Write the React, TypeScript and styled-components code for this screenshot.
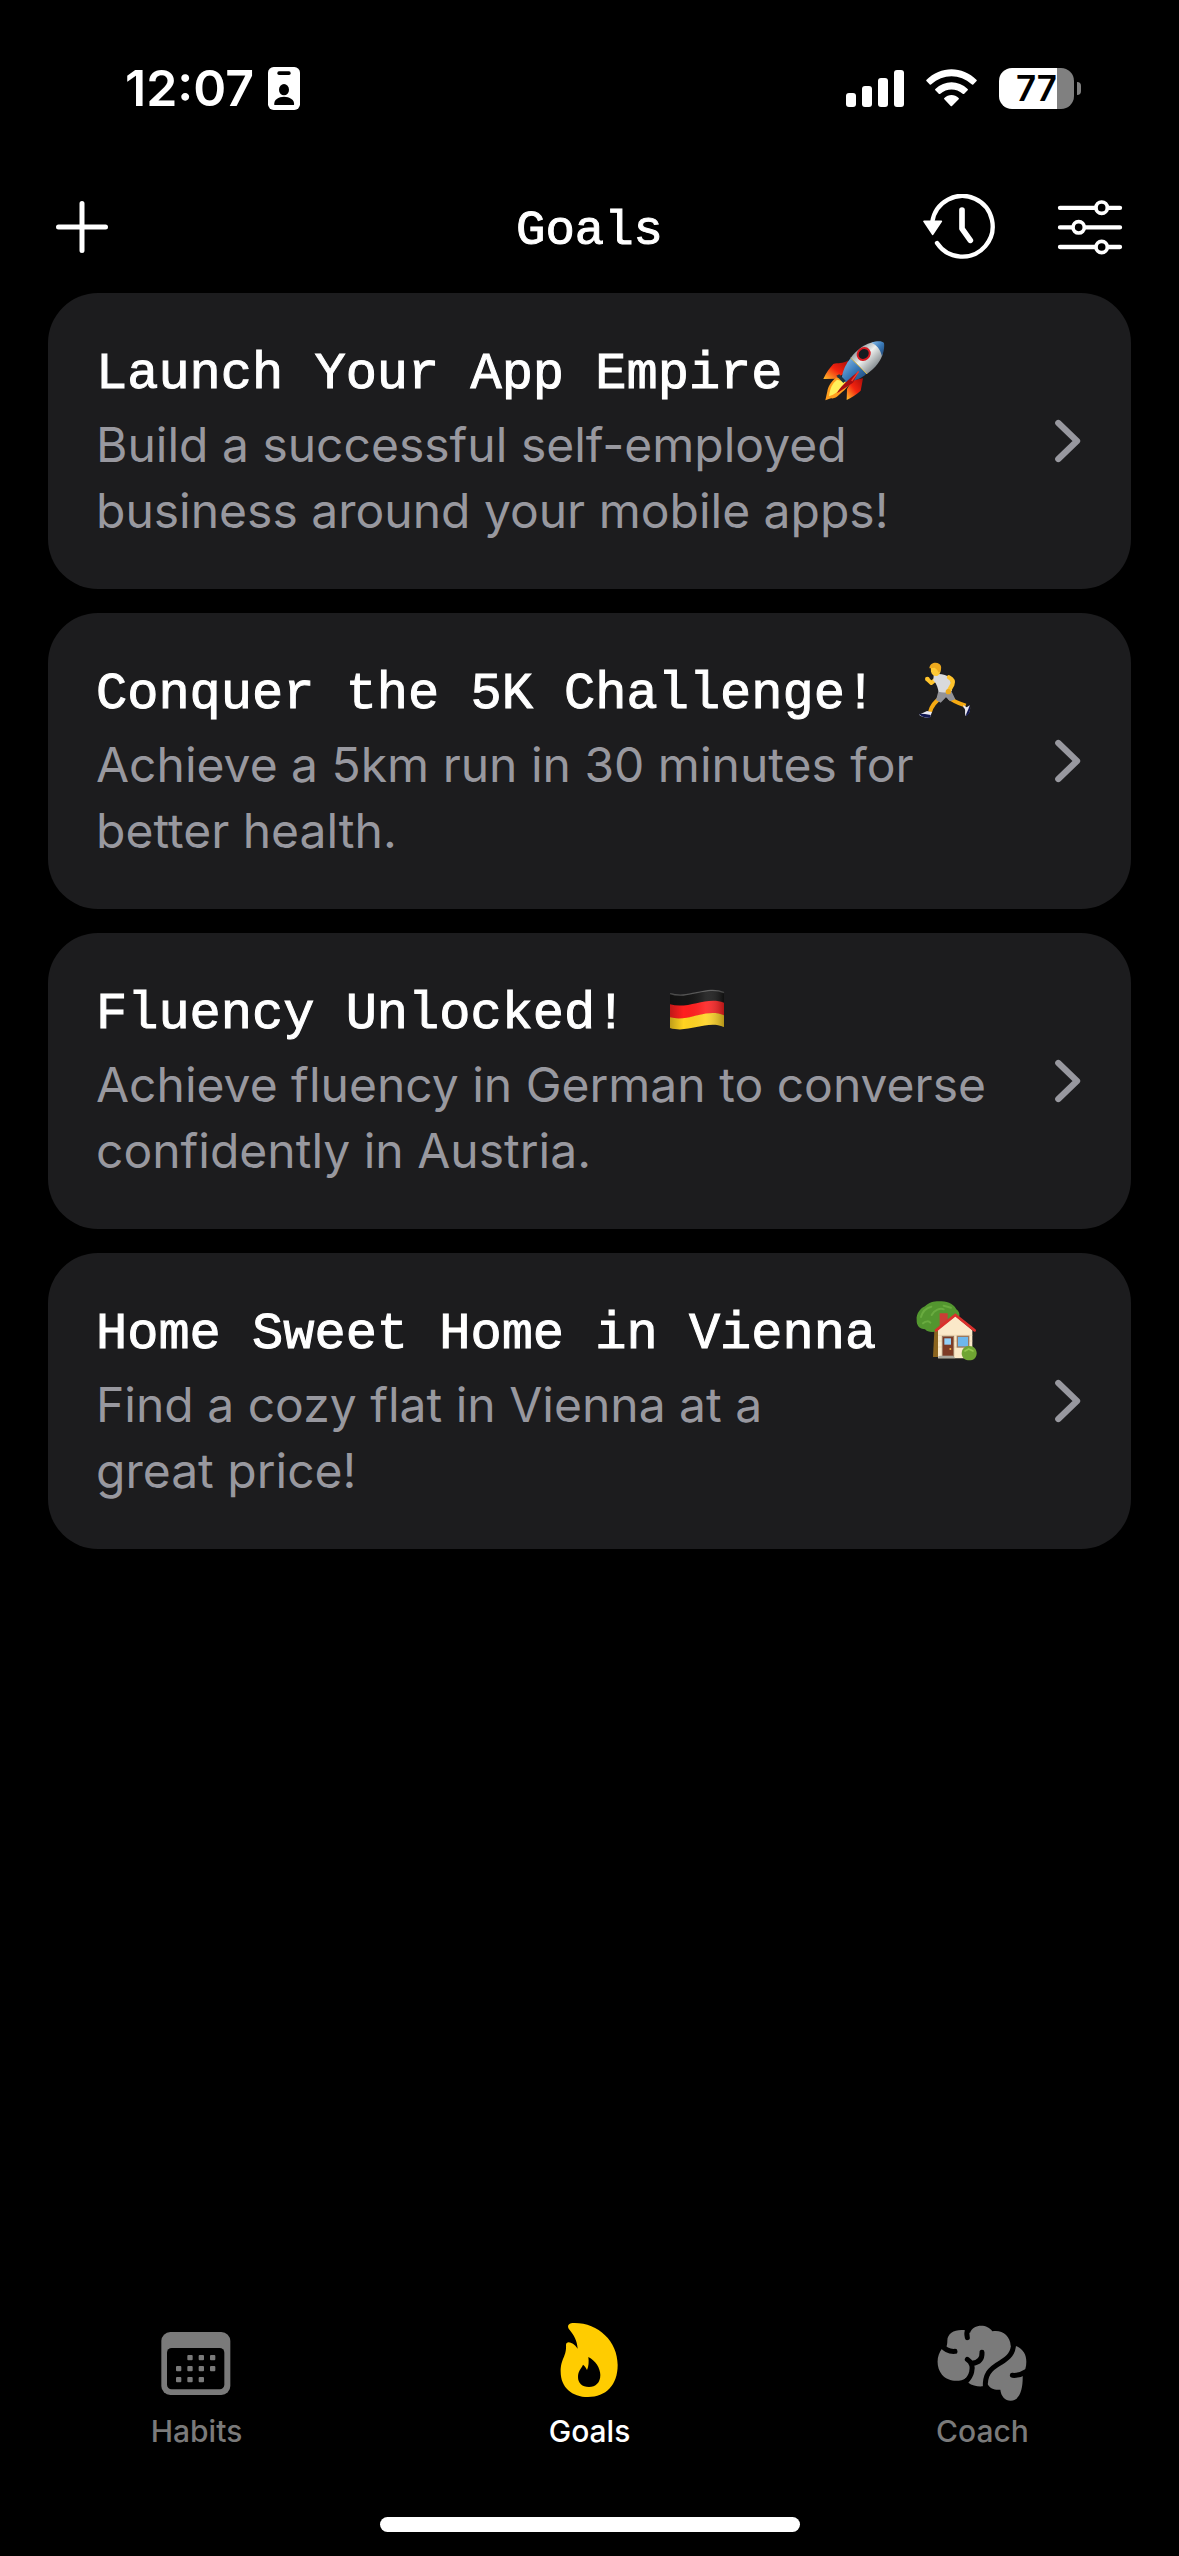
import React from 'react';
import styled, { createGlobalStyle } from 'styled-components';

const sans = `Inter, Roboto, "Liberation Sans", sans-serif`;
const mono = `"Liberation Mono", "DejaVu Sans Mono", monospace`;

const GlobalStyle = createGlobalStyle`
  *, *::before, *::after { box-sizing: border-box; }
  body { margin: 0; background: #000; color: #fff; font-family: ${sans}; }
  h1, h2, p, ul { margin: 0; padding: 0; }
  ul { list-style: none; }
  svg { display: block; flex: none; }
`;

const Screen = styled.div`
  display: flex;
  flex-direction: column;
  min-height: 100vh;
  background: #000;
`;

const StatusBar = styled.div`
  display: flex;
  align-items: center;
  justify-content: space-between;
  height: 176px;
  padding: 0 98px 0 125px;
`;

const StatusGroup = styled.div<{ $gap: number }>`
  display: flex;
  align-items: center;
  gap: ${(p) => p.$gap}px;
`;

const Time = styled.time`
  font-size: 50px;
  line-height: 60px;
  font-weight: 600;
`;

const BatteryWrap = styled.div`
  display: flex;
  align-items: center;
  gap: 3px;
`;

const Battery = styled.div`
  display: flex;
  align-items: center;
  justify-content: center;
  width: 75px;
  height: 41px;
  border-radius: 13px;
  background: linear-gradient(to right, #fff 77%, #808080 77%);
  color: #000;
  font-size: 35px;
  line-height: 41px;
  font-weight: 600;
`;

const BatteryTip = styled.div`
  width: 4px;
  height: 13px;
  border-radius: 0 4px 4px 0;
  background: #808080;
`;

const Header = styled.header`
  display: grid;
  grid-template-columns: 1fr auto 1fr;
  align-items: center;
  height: 102px;
  padding: 0 56px;
`;

const HeaderActions = styled.div`
  display: flex;
  justify-content: flex-end;
  gap: 62px;
`;

const IconButton = styled.button`
  display: block;
  justify-self: start;
  padding: 0;
  border: 0;
  background: none;
  color: #fff;
  cursor: pointer;
`;

const ScreenTitle = styled.h1`
  padding-top: 8px;
  font-family: ${mono};
  font-size: 49px;
  line-height: 60px;
  font-weight: 400;
  -webkit-text-stroke: 1px currentColor;
`;

const GoalList = styled.ul`
  display: flex;
  flex: 1;
  flex-direction: column;
  gap: 24px;
  padding: 15px 48px;
`;

const GoalCard = styled.a`
  display: flex;
  align-items: center;
  justify-content: space-between;
  gap: 32px;
  padding: 45px 50px 45px 48px;
  border-radius: 50px;
  background: #1c1c1e;
  color: #98989f;
  text-decoration: none;
`;

const GoalHeading = styled.div`
  display: flex;
  align-items: center;
  gap: 40px;
  height: 66px;
  margin-bottom: 8px;
  color: #fff;
`;

const GoalTitle = styled.h2`
  padding-top: 8px;
  font-family: ${mono};
  font-size: 52px;
  line-height: 60px;
  font-weight: 400;
  white-space: nowrap;
  -webkit-text-stroke: 1px currentColor;
`;

const GoalText = styled.p`
  font-size: 48px;
  line-height: 66px;
  white-space: pre-line;
`;

const TabBar = styled.nav`
  display: grid;
  grid-template-columns: repeat(3, 1fr);
`;

const Tab = styled.a<{ $active?: boolean }>`
  display: flex;
  flex-direction: column;
  align-items: center;
  gap: 8px;
  color: ${(p) => (p.$active ? '#fff' : '#7a7a7a')};
  font-size: 30px;
  line-height: 38px;
  font-weight: 500;
  text-decoration: none;
`;

const HomeIndicator = styled.div`
  width: 420px;
  height: 15px;
  margin: 67px auto 24px;
  border-radius: 8px;
  background: #fff;
`;

const BadgeIcon = () => (
  <svg width="32" height="43" viewBox="504 81 96 129" aria-hidden="true">
    <rect x="504" y="81" width="96" height="129" rx="17" fill="#fff" />
    <rect x="532" y="94" width="40" height="11" rx="5" fill="#000" />
    <ellipse cx="552" cy="149" rx="15" ry="17" />
    <path d="M523 195C520 179 536 170 552 170S585 179 582 195Z" />
  </svg>
);

const SignalIcon = () => (
  <svg width="58" height="37" viewBox="78 87 174 111" fill="#fff" aria-hidden="true">
    <rect x="78" y="156" width="30" height="42" rx="9" />
    <rect x="126" y="135" width="30" height="63" rx="9" />
    <rect x="174" y="111" width="30" height="87" rx="9" />
    <rect x="222" y="87" width="30" height="111" rx="9" />
  </svg>
);

const WifiIcon = () => (
  <svg width="51" height="38" viewBox="318 86 153 114" fill="#fff" aria-hidden="true">
    <path d="M319 119C362 76 427 76 470 119Q471 121 469 123L459 133Q457 134 455 132C420 100 369 100 334 132Q332 134 330 133L320 123Q318 121 319 119Z" />
    <path d="M346 146C374 119 415 119 443 146Q445 148 443 150L432 161Q430 162 428 160C409 143 380 143 361 160Q359 162 357 161L346 150Q344 148 346 146Z" />
    <path d="M373 173C385 161 404 161 416 173Q418 175 416 177L396 197Q394 199 392 197L373 177Q371 175 373 173Z" />
  </svg>
);

const PlusIcon = () => (
  <svg width="52" height="52" viewBox="0 0 52 52" stroke="#fff" strokeWidth="5" strokeLinecap="round" aria-hidden="true">
    <path d="M26 2.500V49.500M2.500 26H49.500" />
  </svg>
);

const HistoryIcon = () => (
  <svg width="72" height="66" viewBox="69 41 216 198" fill="none" stroke="#fff" strokeLinecap="round" strokeLinejoin="round" aria-hidden="true">
    <path d="M97 124A91 91 0 1 1 111 188" strokeWidth="13" />
    <path d="M72 123H124L98 162Z" fill="#fff" strokeWidth="5" />
    <path d="M186 89V145L211 180" strokeWidth="17" />
  </svg>
);

const SlidersIcon = () => (
  <svg width="66" height="66" viewBox="471 41 198 198" fill="#000" stroke="#fff" strokeWidth="13" strokeLinecap="round" aria-hidden="true">
    <path d="M480 82.500H660M480 141H660M480 200H660" />
    <g strokeWidth="11">
      <circle cx="605" cy="82" r="17" />
      <circle cx="536" cy="141" r="17" />
      <circle cx="605" cy="200" r="17" />
    </g>
  </svg>
);

const ChevronIcon = () => (
  <svg width="26" height="44" viewBox="764 294 78 132" fill="none" stroke="#98989f" strokeWidth="19" strokeLinecap="round" strokeLinejoin="round" aria-hidden="true">
    <path d="M774 306L830 360L774 414" />
  </svg>
);

const RocketEmoji = () => (
  <svg width="62" height="60" viewBox="77 68 186 180" role="img" aria-label="rocket">
    <defs>
      <linearGradient id="hull" x1="0" y1="0" x2="1" y2="1">
        <stop offset="0.2" stopColor="#8f979c" />
        <stop offset="0.45" stopColor="#eef0ee" />
        <stop offset="0.8" stopColor="#7d858a" />
      </linearGradient>
      <linearGradient id="blue" x1="0" y1="0" x2="1" y2="1">
        <stop offset="0" stopColor="#8ec2ee" />
        <stop offset="0.5" stopColor="#3a7ab8" />
        <stop offset="1" stopColor="#1c3f6c" />
      </linearGradient>
      <linearGradient id="fin" x1="1" y1="0" x2="0" y2="1">
        <stop offset="0" stopColor="#a80d0a" />
        <stop offset="0.5" stopColor="#f3230f" />
        <stop offset="1" stopColor="#ffc32c" />
      </linearGradient>
    </defs>
    <path d="M153 126C135 137 122 133 108 137C98 148 87 162 78 182L115 181L137 168Z" fill="url(#fin)" />
    <path d="M197 180L190 217C178 228 161 238 148 245L149 212L165 186Z" fill="url(#fin)" />
    <path d="M116 178C100 190 92 206 90 219L84 246L101 240C119 243 127 225 141 216L160 194L140 178Z" fill="#ff9d1e" />
    <path d="M119 184C103 197 98 211 95 234C112 229 124 218 136 205L144 190Z" fill="#ffef5a" />
    <path d="M160 119L209 165C190 184 163 190 145 192L133 178C137 154 146 136 160 119Z" fill="url(#blue)" />
    <path d="M160 119C178 94 207 73 230 72L257 102C252 128 234 149 209 167Z" fill="url(#hull)" />
    <path d="M222 73C240 67 255 68 260 74C262 87 259 102 254 114C250 94 238 79 222 73Z" fill="url(#blue)" />
    <path d="M160 119L209 167" stroke="#d4b84c" strokeWidth="3" />
    <path d="M184 159L167 193L119 225C129 204 148 190 166 173Z" fill="#a50d12" />
    <path d="M184 159L163 188" stroke="#f53b2c" strokeWidth="4" />
    <path d="M117 172L126 168L145 187L138 194Z" fill="#1e3442" />
    <ellipse cx="199" cy="107" rx="19" ry="17" fill="#151b20" stroke="#d71920" strokeWidth="6" transform="rotate(-40 199 107)" />
  </svg>
);

const RunnerEmoji = () => (
  <svg width="62" height="60" viewBox="840 129 186 180" role="img" aria-label="runner">
    <path d="M913 240C895 252 886 267 882 282" fill="none" stroke="#f5aa13" strokeWidth="12" />
    <path d="M940 239C954 251 969 256 989 263" fill="none" stroke="#f5aa13" strokeWidth="12" />
    <path d="M902 182L886 195L874 184" fill="none" stroke="#ffc42c" strokeWidth="12" strokeLinejoin="round" />
    <circle cx="874" cy="183" r="7" fill="#ffc42c" />
    <path d="M873 279L888 282L882 298C870 301 857 296 849 290Z" fill="#e8e8f2" />
    <path d="M849 287L867 288L884 291L882 299C867 300 855 295 849 287Z" fill="#101651" />
    <path d="M982 261L992 268L1001 262C1005 277 1000 288 989 294C984 283 992 276 982 268Z" fill="#e8e8f2" />
    <path d="M1000 262C1006 276 1000 290 990 294C990 284 998 278 1000 262Z" fill="#101651" />
    <path d="M909 213L945 217L958 244L942 250L930 238L914 254L900 246Z" fill="#929297" />
    <path d="M893 171C907 164 929 169 943 179L948 218C936 224 919 225 908 221C904 205 900 193 892 188Z" fill="#d9dadc" />
    <path d="M939 178C949 183 953 190 949 200L939 218" fill="none" stroke="#ffc42c" strokeWidth="13" strokeLinecap="round" />
    <circle cx="937" cy="221" r="8" fill="#edaa1c" />
    <path d="M884 148C890 138 912 139 914 154C915 162 911 169 905 173C894 176 887 169 885 161Z" fill="#ffc934" />
    <path d="M880 151C882 134 900 131 910 138C918 144 917 155 909 164L903 155L896 149Z" fill="#eda91e" />
  </svg>
);

const FlagEmoji = () => (
  <svg width="62" height="60" viewBox="84 69 186 180" role="img" aria-label="Germany">
    <defs>
      <linearGradient id="shade">
        <stop offset="0" stopColor="#000" stopOpacity="0.25" />
        <stop offset="0.25" stopColor="#000" stopOpacity="0" />
        <stop offset="0.65" stopColor="#fff" stopOpacity="0.1" />
        <stop offset="1" stopColor="#000" stopOpacity="0.3" />
      </linearGradient>
    </defs>
    <path d="M93 106C150 124 203 80 255 103V136C203 116 150 158 93 141Z" fill="#151515" />
    <path d="M93 107C150 125 203 81 255 104" fill="none" stroke="#555" strokeWidth="4" />
    <path d="M93 139C150 155 203 113 255 134V173C203 151 150 195 93 180Z" fill="#ff1f1f" />
    <path d="M93 178C150 193 203 149 255 172V207C203 185 150 227 93 210Z" fill="#ffd321" />
    <path d="M93 106C150 124 203 80 255 103V207C203 185 150 227 93 210Z" fill="url(#shade)" />
  </svg>
);

const HouseEmoji = () => (
  <svg width="62" height="60" viewBox="120 159 186 180" role="img" aria-label="house with garden">
    <path d="M175 248H189V327H171Z" fill="#8b641f" />
    <path d="M122 217C120 195 135 180 147 175C159 162 177 159 194 160C218 159 235 171 241 184C257 195 250 215 239 225L185 249C169 255 154 252 147 244C131 244 121 232 122 217Z" fill="#53962f" />
    <path d="M135 207C140 188 153 179 166 176M167 201C175 185 193 180 203 184M141 226C150 218 159 219 163 224M203 173L225 179" fill="none" stroke="#69ab3f" strokeWidth="6" strokeLinecap="round" />
    <path d="M191 196H215V217L191 237Z" fill="#cc3d35" />
    <path d="M186 245L238 204L289 247V331H186Z" fill="#fbe9c9" />
    <path d="M186 262H289M186 279H289M186 297H289" stroke="#e9d2ab" strokeWidth="2" />
    <path d="M180 247L238 201L296 247" fill="none" stroke="#db2f2c" strokeWidth="8" strokeLinecap="round" />
    <rect x="199" y="265" width="34" height="60" fill="#7d3b26" stroke="#9a7960" strokeWidth="3" />
    <rect x="205" y="271" width="20" height="19" fill="#92cff7" />
    <circle cx="223" cy="303" r="3" fill="#f0b64a" />
    <rect x="244" y="265" width="34" height="32" fill="#6eb7ec" stroke="#9a7960" strokeWidth="4" />
    <path d="M187 331V325L193 323H231L238 331Z" fill="#aaa79d" />
    <path d="M257 317C257 302 267 294 280 294C294 294 302 304 302 317C301 330 292 337 280 337S258 330 257 317Z" fill="#6fa432" />
    <path d="M267 309L278 303L291 309" fill="none" stroke="#94c74c" strokeWidth="5" strokeLinecap="round" />
  </svg>
);

const CalendarIcon = () => (
  <svg width="96" height="84" viewBox="86 60 288 252" fill="#7a7a7a" aria-hidden="true">
    <rect x="123" y="96" width="207" height="189" rx="27" />
    <rect x="140" y="144" width="172" height="124" rx="14" fill="#000" />
    {[[201, 165], [235, 165], [269, 165], [167, 198], [201, 198], [235, 198], [269, 198], [167, 231], [201, 231], [235, 231]].map(
      ([x, y]) => (
        <rect key={`${x}-${y}`} x={x} y={y} width="16" height="16" rx="3" />
      ),
    )}
  </svg>
);

const FlameIcon = () => (
  <svg width="96" height="84" viewBox="94 60 288 252" aria-hidden="true">
    <path
      fill="#ffcc00"
      d="M186 69C260 66 321 122 321 195C321 255 286 291 232 291C184 291 150 262 150 215C150 175 168 170 166 135C166 122 186 124 201 146C199 122 190 105 177 90C168 80 172 70 186 69Z"
    />
    <path d="M233 171C255 182 269 205 269 225C269 248 255 261 235 261C214 261 202 249 202 231C202 212 212 206 217 194C222 198 226 203 229 210C234 200 235 185 233 171Z" />
  </svg>
);

const BrainIcon = () => (
  <svg width="96" height="84" viewBox="103 60 288 252" aria-hidden="true">
    <path
      fill="#7a7a7a"
      d="M126 143C134 150 140 140 140 122C140 98 166 86 195 91L208 99C217 71 260 70 275 94C303 88 329 107 330 137L348 139C368 148 377 165 377 185C377 200 373 213 366 226C367 260 361 302 330 302C313 302 301 288 299 269C284 271 268 267 261 253L246 259C231 260 214 257 203 248L197 233C175 249 142 244 124 224C106 203 106 166 126 143Z"
    />
    <g fill="none" stroke="#000" strokeWidth="15" strokeLinecap="round">
      <path d="M122 134Q138 156 163 154" />
      <path d="M203 84Q196 98 200 113" />
      <path d="M244 157C245 176 235 188 214 190" />
      <path d="M200 178C212 186 217 200 213 216C210 230 203 238 194 247" />
      <path d="M339 130C338 160 325 172 300 188C265 208 252 225 254 264" />
      <path d="M335 226Q356 228 376 215" />
    </g>
  </svg>
);

const goals = [
  { title: 'Launch Your App Empire', text: 'Build a successful self-employed\nbusiness around your mobile apps!', Emoji: RocketEmoji },
  { title: 'Conquer the 5K Challenge!', text: 'Achieve a 5km run in 30 minutes for\nbetter health.', Emoji: RunnerEmoji },
  { title: 'Fluency Unlocked!', text: 'Achieve fluency in German to converse\nconfidently in Austria.', Emoji: FlagEmoji },
  { title: 'Home Sweet Home in Vienna', text: 'Find a cozy flat in Vienna at a\ngreat price!', Emoji: HouseEmoji },
];

const tabs = [
  { label: 'Habits', Icon: CalendarIcon },
  { label: 'Goals', Icon: FlameIcon, active: true },
  { label: 'Coach', Icon: BrainIcon },
];

export default function App() {
  return (
    <Screen>
      <GlobalStyle />
      <StatusBar>
        <StatusGroup $gap={14}>
          <Time>12:07</Time>
          <BadgeIcon />
        </StatusGroup>
        <StatusGroup $gap={22}>
          <SignalIcon />
          <WifiIcon />
          <BatteryWrap>
            <Battery>77</Battery>
            <BatteryTip />
          </BatteryWrap>
        </StatusGroup>
      </StatusBar>
      <Header>
        <IconButton aria-label="Add goal">
          <PlusIcon />
        </IconButton>
        <ScreenTitle>Goals</ScreenTitle>
        <HeaderActions>
          <IconButton aria-label="History">
            <HistoryIcon />
          </IconButton>
          <IconButton aria-label="Filters">
            <SlidersIcon />
          </IconButton>
        </HeaderActions>
      </Header>
      <GoalList>
        {goals.map(({ title, text, Emoji }) => (
          <li key={title}>
            <GoalCard href="#goal">
              <div>
                <GoalHeading>
                  <GoalTitle>{title}</GoalTitle>
                  <Emoji />
                </GoalHeading>
                <GoalText>{text}</GoalText>
              </div>
              <ChevronIcon />
            </GoalCard>
          </li>
        ))}
      </GoalList>
      <TabBar>
        {tabs.map(({ label, Icon, active }) => (
          <Tab key={label} href={`#${label.toLowerCase()}`} $active={active} aria-current={active ? 'page' : undefined}>
            <Icon />
            {label}
          </Tab>
        ))}
      </TabBar>
      <HomeIndicator />
    </Screen>
  );
}
